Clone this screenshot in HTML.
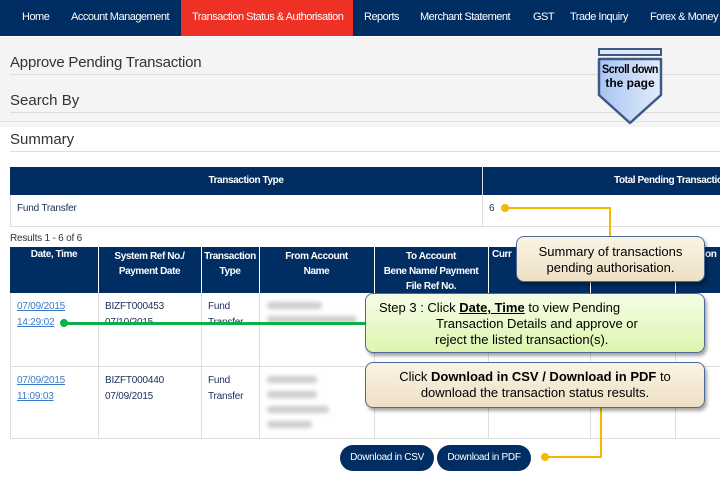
<!DOCTYPE html>
<html><head><meta charset="utf-8"><style>
*{margin:0;padding:0;box-sizing:border-box}
body{width:720px;height:480px;overflow:hidden;background:#fff;font-family:"Liberation Sans",sans-serif;position:relative}
.a{position:absolute}
.nav{left:0;top:0;width:720px;height:36px;background:#002d62}
.nv{top:0;height:36px;line-height:35px;color:#fff;font-size:11px;letter-spacing:-0.5px;white-space:nowrap}
.hd{background:#002d62;color:#fff;font-size:10px;font-weight:bold;text-align:center;letter-spacing:-0.4px}
.t{font-size:10px;color:#1b2e55;letter-spacing:-0.2px}
.vl{width:1px;background:#ddd}
.bl{background:#ccc;filter:blur(2px);height:7px;border-radius:3px}
.co{border:1.5px solid #4a6a9a;border-radius:8px;box-shadow:2px 3px 3px rgba(0,0,0,.35);text-align:center;color:#000;font-size:13px;line-height:16px}
.tan{background:linear-gradient(#fbf3e4,#ede0c4)}
</style></head><body>
<div class="a nav"></div>
<div class="a" style="left:181px;top:0;width:172px;height:36px;background:#ee3124"></div>
<div class="a nv" style="left:22px">Home</div>
<div class="a nv" style="left:71px">Account Management</div>
<div class="a nv" style="left:192px">Transaction Status &amp; Authorisation</div>
<div class="a nv" style="left:364px">Reports</div>
<div class="a nv" style="left:420px">Merchant Statement</div>
<div class="a nv" style="left:533px">GST</div>
<div class="a nv" style="left:570px">Trade Inquiry</div>
<div class="a nv" style="left:650px">Forex &amp; Money /</div>

<div class="a" style="left:0;top:37px;width:720px;height:90px;background:#f4f4f4"></div>
<div class="a" style="left:10px;top:54px;font-size:15px;color:#333;letter-spacing:-0.2px">Approve Pending Transaction</div>
<div class="a" style="left:10px;top:74px;width:710px;height:1px;background:#ddd"></div>
<div class="a" style="left:10px;top:92px;font-size:15px;color:#333">Search By</div>
<div class="a" style="left:10px;top:112px;width:710px;height:1px;background:#ddd"></div>
<div class="a" style="left:0;top:121px;width:720px;height:1px;background:#e4e4e4"></div>
<div class="a" style="left:10px;top:131px;font-size:15px;color:#333">Summary</div>
<div class="a" style="left:10px;top:151px;width:710px;height:1px;background:#ddd"></div>

<div class="a hd" style="left:10px;top:167px;width:710px;height:28px"></div>
<div class="a hd" style="left:10px;top:175px;width:472px">Transaction Type</div>
<div class="a hd" style="left:614px;top:175px;white-space:nowrap">Total Pending Transaction</div>
<div class="a" style="left:482px;top:167px;width:1px;height:59px;background:#ddd"></div>
<div class="a" style="left:10px;top:195px;width:1px;height:31px;background:#ddd"></div>
<div class="a" style="left:10px;top:226px;width:710px;height:1px;background:#ddd"></div>
<div class="a t" style="left:17px;top:203px">Fund Transfer</div>
<div class="a t" style="left:489px;top:203px">6</div>
<div class="a t" style="left:10px;top:233px;color:#333">Results 1 - 6 of 6</div>

<div class="a hd" style="left:10px;top:247px;width:710px;height:46px"></div>
<div class="a hd" style="left:10px;top:249px;width:88px">Date, Time</div>
<div class="a hd" style="left:98px;top:249px;width:103px;line-height:15px">System Ref No./<br>Payment Date</div>
<div class="a hd" style="left:201px;top:249px;width:58px;line-height:15px">Transaction<br>Type</div>
<div class="a hd" style="left:259px;top:249px;width:115px;line-height:15px">From Account<br>Name</div>
<div class="a hd" style="left:374px;top:249px;width:114px;line-height:15px">To Account<br>Bene Name/ Payment<br>File Ref No.</div>
<div class="a hd" style="left:492px;top:249px">Curr</div>
<div class="a hd" style="left:705px;top:249px">on</div>
<div class="a" style="left:98px;top:247px;width:1px;height:192px;background:#fff"></div>
<div class="a" style="left:201px;top:247px;width:1px;height:192px;background:#fff"></div>
<div class="a" style="left:259px;top:247px;width:1px;height:192px;background:#fff"></div>
<div class="a" style="left:374px;top:247px;width:1px;height:192px;background:#fff"></div>
<div class="a" style="left:488px;top:247px;width:1px;height:192px;background:#fff"></div>
<div class="a" style="left:590px;top:247px;width:1px;height:192px;background:#fff"></div>
<div class="a" style="left:675px;top:247px;width:1px;height:192px;background:#fff"></div>
<div class="a vl" style="left:10px;top:293px;height:146px"></div>
<div class="a vl" style="left:98px;top:293px;height:146px"></div>
<div class="a vl" style="left:201px;top:293px;height:146px"></div>
<div class="a vl" style="left:259px;top:293px;height:146px"></div>
<div class="a vl" style="left:374px;top:293px;height:146px"></div>
<div class="a vl" style="left:488px;top:293px;height:146px"></div>
<div class="a vl" style="left:590px;top:293px;height:146px"></div>
<div class="a vl" style="left:675px;top:293px;height:146px"></div>
<div class="a" style="left:10px;top:366px;width:710px;height:1px;background:#ddd"></div>
<div class="a" style="left:10px;top:438px;width:710px;height:1px;background:#ddd"></div>

<div class="a t" style="left:17px;top:299px;line-height:16px;color:#3a7bc8;text-decoration:underline">07/09/2015<br>14:29:02</div>
<div class="a t" style="left:105px;top:299px;line-height:16px">BIZFT000453<br>07/10/2015</div>
<div class="a t" style="left:208px;top:299px;line-height:16px">Fund<br>Transfer</div>
<div class="a bl" style="left:267px;top:302px;width:55px"></div>
<div class="a bl" style="left:267px;top:316px;width:90px"></div>
<div class="a t" style="left:17px;top:373px;line-height:16px;color:#3a7bc8;text-decoration:underline">07/09/2015<br>11:09:03</div>
<div class="a t" style="left:105px;top:373px;line-height:16px">BIZFT000440<br>07/09/2015</div>
<div class="a t" style="left:208px;top:373px;line-height:16px">Fund<br>Transfer</div>
<div class="a bl" style="left:267px;top:376px;width:50px"></div>
<div class="a bl" style="left:267px;top:391px;width:50px"></div>
<div class="a bl" style="left:267px;top:406px;width:62px"></div>
<div class="a bl" style="left:267px;top:421px;width:45px"></div>

<div class="a" style="left:340px;top:445px;width:94px;height:26px;border-radius:13px;background:#002d62;color:#fff;font-size:10px;line-height:26px;text-align:center;letter-spacing:-0.3px">Download in CSV</div>
<div class="a" style="left:437px;top:445px;width:94px;height:26px;border-radius:13px;background:#002d62;color:#fff;font-size:10px;line-height:26px;text-align:center;letter-spacing:-0.3px">Download in PDF</div>

<div class="a" style="left:505px;top:207px;width:105px;height:2px;background:#f5b800"></div>
<div class="a" style="left:609px;top:207px;width:2px;height:30px;background:#f5b800"></div>
<div class="a" style="left:501px;top:204px;width:8px;height:8px;border-radius:50%;background:#f5b800"></div>
<div class="a" style="left:545px;top:456px;width:57px;height:2px;background:#f5b800"></div>
<div class="a" style="left:600px;top:407px;width:2px;height:51px;background:#f5b800"></div>
<div class="a" style="left:541px;top:453px;width:8px;height:8px;border-radius:50%;background:#f5b800"></div>
<div class="a" style="left:64px;top:322px;width:302px;height:3px;background:#0bb04b"></div>
<div class="a" style="left:60px;top:319px;width:8px;height:8px;border-radius:50%;background:#0bb04b"></div>

<div class="a co tan" style="left:516px;top:236px;width:189px;height:46px;padding-top:7px">Summary of transactions<br>pending authorisation.</div>
<div class="a co" style="left:365px;top:293px;width:340px;height:60px;padding-top:6px;text-align:left;padding-left:13px;background:linear-gradient(#f6fde8,#dcf5ae)">Step 3 : Click <b><u>Date, Time</u></b> to view Pending<br><span style="padding-left:57px">Transaction Details and approve or</span><br><span style="padding-left:56px">reject the listed transaction(s).</span></div>
<div class="a co tan" style="left:365px;top:362px;width:340px;height:46px;padding-top:6px">Click <b>Download in CSV / Download in PDF</b> to<br>download the transaction status results.</div>

<svg class="a" style="left:597px;top:47px" width="66" height="80" viewBox="0 0 66 80">
<defs><linearGradient id="g" x1="0" x2="1"><stop offset="0" stop-color="#a8c4f2"/><stop offset="1" stop-color="#e2ecfb"/></linearGradient></defs>
<rect x="2" y="2" width="62" height="6" fill="#dfe8f7" stroke="#3d5a87" stroke-width="2"/>
<path d="M2 12 H64 V48 L33 76 L2 48 Z" fill="url(#g)" stroke="#3d5a87" stroke-width="2.5" stroke-linejoin="round"/>
<text x="33" y="26" text-anchor="middle" font-family="Liberation Sans" font-weight="bold" font-size="12" letter-spacing="-0.5" textLength="56" lengthAdjust="spacingAndGlyphs" fill="#000">Scroll down</text>
<text x="33" y="40" text-anchor="middle" font-family="Liberation Sans" font-weight="bold" font-size="12" fill="#000">the page</text>
</svg>
</body></html>
